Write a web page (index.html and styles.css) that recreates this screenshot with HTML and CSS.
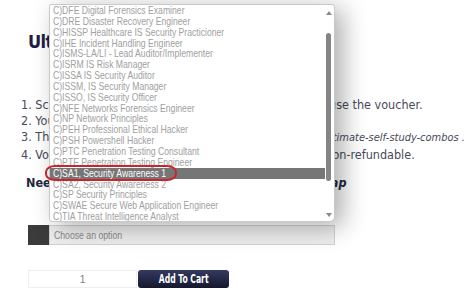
FILE: index.html
```html
<!DOCTYPE html>
<html lang="en">
<head>
  <meta charset="UTF-8" />
  <title>Ultimate Self-Study Combo</title>
  <meta name="viewport" content="width=device-width, initial-scale=1.0"/>
  <link rel="stylesheet" href="styles.css">
</head>
<body>

  <div class="product">
    <h2 class="title">Ultimate Self-Study Combo</h2>

    <ol class="terms">
      <li>1. Schedule your exams within 12 months, before you use the voucher.</li>
      <li>2. You will receive the voucher by e-mail.</li>
      <li>3. This voucher is only valid for products listed under <em>ultimate-self-study-combos .</em></li>
      <li>4. Vouchers stay personal, non-transferable, and also non-refundable.</li>
    </ol>

    <p class="need">Need help choosing a Course? Check our <em>Roadmap</em></p>

    <div class="variation">
      <span class="swatch"></span>
      <div class="select"><span class="narrow">Choose an option</span></div>
    </div>

    <div class="cart">
      <div class="qty">1</div>
      <button class="add-btn"><span class="btn-label">Add To Cart</span></button>
    </div>
  </div>

  <!-- open select list, drawn over the page -->
  <div class="dropdown">
    <ul class="options">
      <li><span>C)DFE Digital Forensics Examiner</span></li>
      <li><span>C)DRE Disaster Recovery Engineer</span></li>
      <li><span>C)HISSP Healthcare IS Security Practicioner</span></li>
      <li><span>C)IHE Incident Handling Engineer</span></li>
      <li><span>C)ISMS-LA/LI - Lead Auditor/Implementer</span></li>
      <li><span>C)ISRM IS Risk Manager</span></li>
      <li><span>C)ISSA IS Security Auditor</span></li>
      <li><span>C)ISSM, IS Security Manager</span></li>
      <li><span>C)ISSO, IS Security Officer</span></li>
      <li><span>C)NFE Networks Forensics Engineer</span></li>
      <li><span>C)NP Network Principles</span></li>
      <li><span>C)PEH Professional Ethical Hacker</span></li>
      <li><span>C)PSH Powershell Hacker</span></li>
      <li><span>C)PTC Penetration Testing Consultant</span></li>
      <li><span>C)PTE Penetration Testing Engineer</span></li>
      <li class="active"><span>C)SA1, Security Awareness 1</span></li>
      <li><span>C)SA2, Security Awareness 2</span></li>
      <li><span>C)SP Security Principles</span></li>
      <li><span>C)SWAE Secure Web Application Engineer</span></li>
      <li><span>C)TIA Threat Intelligence Analyst</span></li>
    </ul>
    <div class="scrollbar">
      <span class="arrow up"></span>
      <span class="thumb"></span>
      <span class="arrow down"></span>
    </div>
  </div>

  <div class="marker"></div>

</body>
</html>
```

FILE: styles.css
```css
body {
  margin: 0;
  background: #ffffff;
  font-family: "DejaVu Sans Condensed", "DejaVu Sans", sans-serif;
  color: #474a5c;
  overflow: hidden;
}

.product {
  padding: 0 28px;
}

.title {
  margin: 31px 0 0;
  font-size: 18px;
  font-weight: bold;
  color: #1d2045;
  letter-spacing: -0.6px;
}

.terms {
  list-style: none;
  margin: 45px 0 0 -7px;
  padding: 0;
  font-size: 12.5px;
  line-height: 16.2px;
  white-space: nowrap;
}

.terms em {
  font-size: 11px;
}

.need {
  margin: 12px 0 0 -2px;
  font-size: 12.5px;
  font-weight: bold;
  color: #23263f;
  white-space: nowrap;
}

.variation {
  display: flex;
  margin-top: 35px;
  height: 20px;
}

.swatch {
  width: 21px;
  background: #3b3b3b;
}

.select {
  width: 286px;
  border: 1px solid #d2d2d2;
  background: #ededed;
  font-family: "Liberation Sans", sans-serif;
  font-size: 10.6px;
  line-height: 18px;
  color: #8a8a8a;
  padding-left: 4px;
  box-sizing: border-box;
}

.narrow {
  display: inline-block;
  transform: scaleX(0.82);
  transform-origin: left center;
}

.cart {
  display: flex;
  margin-top: 25px;
  height: 18px;
}

.qty {
  width: 109px;
  border: 1px solid #efefef;
  box-sizing: border-box;
  text-align: center;
  font-family: "Liberation Sans", sans-serif;
  font-size: 11px;
  line-height: 16px;
  color: #888;
}

.add-btn {
  margin-left: 1px;
  width: 91px;
  border: none;
  border-radius: 3px;
  background: linear-gradient(#343a62, #15182d);
  color: #ffffff;
  font-family: "DejaVu Sans Condensed", sans-serif;
  font-weight: bold;
  font-size: 11.5px;
  padding: 0;
  overflow: hidden;
}

.btn-label {
  display: inline-block;
  transform: scaleX(0.74);
  white-space: nowrap;
}

.dropdown {
  position: absolute;
  left: 49px;
  top: 4px;
  width: 286px;
  height: 218px;
  box-sizing: border-box;
  border: 1px solid #c9c9c9;
  border-radius: 2px 3px 5px 3px;
  background: #ffffff;
  box-shadow: 8px 5px 24px rgba(0, 0, 0, 0.32);
  display: flex;
}

.options {
  list-style: none;
  margin: 0;
  padding: 0;
  flex: 1;
  font-family: "Liberation Sans", sans-serif;
  font-size: 10.8px;
  line-height: 10.85px;
  color: #a0a0a0;
  overflow: hidden;
}

.options li {
  padding-left: 3px;
  white-space: nowrap;
}

.options li span {
  display: inline-block;
  transform: scaleX(0.8);
  transform-origin: left center;
}

.options li.active {
  background: #767676;
  color: #ffffff;
}

.scrollbar {
  position: relative;
  width: 9px;
}

.thumb {
  position: absolute;
  left: 1px;
  top: 28px;
  width: 5px;
  height: 148px;
  border-radius: 3px;
  background: #858585;
}

.arrow {
  position: absolute;
  left: 1px;
  width: 0;
  height: 0;
  border-left: 3px solid transparent;
  border-right: 3px solid transparent;
}

.arrow.up {
  top: 6px;
  border-bottom: 4px solid #8a8a8a;
}

.arrow.down {
  bottom: 4px;
  border-top: 4px solid #8a8a8a;
}

.marker {
  position: absolute;
  left: 45px;
  top: 165px;
  width: 128px;
  height: 12px;
  border: 2px solid #c9262b;
  border-radius: 10px / 7px;
}
```
